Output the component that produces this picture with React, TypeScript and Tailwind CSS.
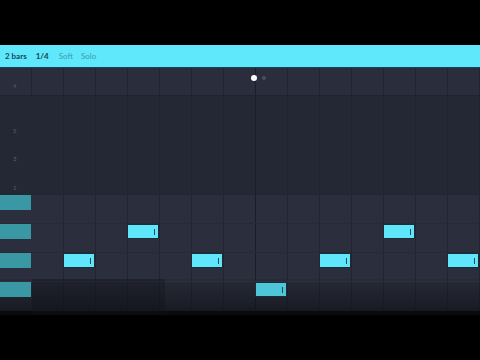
import React from "react";

const COLS = 14;

function lineClass(c: number) {
  if (c === 6) return "border-r border-r-[#1b1e28]";
  return "border-r border-r-[#22252f]";
}

function Note({ dim }: { dim?: boolean }) {
  return (
    <div
      className={`relative z-10 -ml-px h-[15px] w-[32px] border border-[#1c2c36] ${
        dim ? "bg-[#4ec5d8]" : "bg-[#5fe6fb]"
      }`}
    >
      <div className="absolute right-[3px] top-[4px] h-[6px] w-px bg-[#1d4a57]" />
    </div>
  );
}

const lowerRows: number[][] = [[], [4, 12], [2, 6, 10, 14], [8]];
const upperRows = [
  { h: "h-[20px]", label: "", pad: "pt-0" },
  { h: "h-[28px]", label: "5", pad: "pt-[12px]" },
  { h: "h-[28px]", label: "3", pad: "pt-[12px]" },
  { h: "h-[23px]", label: "1", pad: "pt-[13px]" },
];

export default function App() {
  return (
    <div
      className="relative flex h-[360px] w-[480px] flex-col overflow-hidden bg-black"
      style={{ fontFamily: "Lato, 'Noto Sans', sans-serif" }}
    >
      <div className="h-[45px] shrink-0 bg-black" />
      <div className="flex h-[22px] shrink-0 items-center bg-[#5fe7fb] pl-[5px] text-[8px] leading-none">
        <span className="font-bold text-[#174652]">2 bars</span>
        <span className="ml-[9px] font-bold text-[#174652]">1/4</span>
        <span className="ml-[10px] text-[#3b9fae]">Soft</span>
        <span className="ml-[8px] text-[#3b9fae]">Solo</span>
      </div>
      <div className="h-[1px] shrink-0 bg-[#14474f]" />
      {/* header row */}
      <div className="relative flex h-[27px] shrink-0 bg-[#2a2d3b]">
        <div className="w-[32px] border-r border-r-[#22252f] pl-[13px] pt-[15px] text-[6px] leading-none text-[#555a6a]">
          4
        </div>
        {Array.from({ length: COLS }).map((_, c) => (
          <div key={c} className={`w-[32px] ${lineClass(c)}`} />
        ))}
        <div className="absolute left-[251px] top-[7px] flex items-center gap-[5px]">
          <div className="h-[6px] w-[6px] rounded-full bg-white" />
          <div className="h-[4px] w-[4px] rounded-full bg-[#4a4e5e]" />
        </div>
      </div>
      <div className="h-px shrink-0 bg-[#20232d]" />
      {/* upper rows */}
      <div className="flex shrink-0 flex-col bg-[#242734]">
        {upperRows.map((r, i) => (
          <div key={i} className={`flex ${r.h}`}>
            <div
              className={`w-[32px] pl-[13px] ${r.pad} text-[6px] leading-none text-[#5a5f70]`}
            >
              {r.label}
            </div>
            {Array.from({ length: COLS }).map((_, c) => (
              <div key={c} className={`w-[32px] ${lineClass(c)}`} />
            ))}
          </div>
        ))}
      </div>
      {/* lower rows with notes */}
      <div className="flex shrink-0 flex-col bg-[#2b2e3c]">
        {lowerRows.map((notes, r) => (
          <div
            key={r}
            className={`flex h-[29px] border-b ${
              r === 2 ? "border-b-[#343746]" : "border-b-[#262936]"
            }`}
          >
            <div className="relative z-10 w-[32px] pr-px">
              <div className="h-[15px] w-[31px] bg-[#3a98a5]" />
            </div>
            {Array.from({ length: COLS }).map((_, c) => (
              <div key={c} className={`w-[32px] ${lineClass(c)}`}>
                {notes.includes(c + 1) ? <Note dim={r === 3} /> : null}
              </div>
            ))}
          </div>
        ))}
      </div>
      <div className="flex-1 bg-black" />
      {/* video overlay shading at the bottom */}
      <div className="pointer-events-none absolute left-0 top-[279px] h-[36px] w-[480px] bg-gradient-to-b from-[#1a1c24]/20 to-[#0d0f15]/70" />
      <div className="pointer-events-none absolute left-[32px] top-[279px] h-[36px] w-[133px] bg-[#10121a]/35" />
    </div>
  );
}
